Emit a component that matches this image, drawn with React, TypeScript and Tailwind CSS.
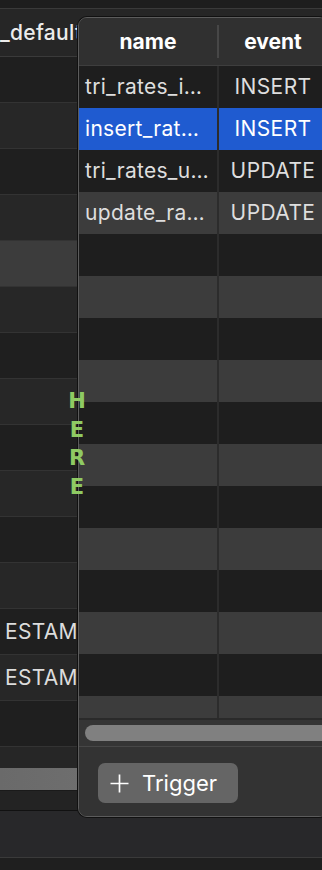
import React from "react"

const bgRows = Array.from({ length: 15 }, (_, i) => i)
const popupRows = [
  { name: "tri_rates_i…", event: "INSERT" },
  { name: "insert_rat…", event: "INSERT" },
  { name: "tri_rates_u…", event: "UPDATE" },
  { name: "update_ra…", event: "UPDATE" },
]

function bgRowClass(i: number) {
  if (i === 4) return "bg-[#3c3c3c]"
  return i % 2 === 0 ? "bg-[#1f1f1f]" : "bg-[#272727]"
}

function popupRowClass(i: number) {
  if (i === 1) return "bg-[#1f5bd0] text-white"
  return i % 2 === 0 ? "bg-[#1e1e1e]" : "bg-[#3c3c3c]"
}

export default function App() {
  return (
    <div
      className="relative w-[322px] h-[870px] overflow-hidden bg-[#1f1f1f] text-[#dedede]"
      style={{ fontFamily: "Inter, 'Liberation Sans', sans-serif" }}
    >
      {/* table behind the sheet */}
      <div className="flex flex-col">
        <div className="h-[9px] bg-[#1e1e1e] border-b border-[#3a3a3a]" />
        <div className="h-[48px] bg-[#262626] border-b border-[#3a3a3a] flex items-center">
          <span className="text-[21px] font-medium text-[#ececec] whitespace-nowrap tracking-[0.3px]">_default</span>
        </div>
        {bgRows.map((i) => (
          <div
            key={i}
            className={`h-[46px] border-b border-[#333333] flex items-center ${bgRowClass(i)}`}
          >
            {(i === 12 || i === 13) && (
              <span className="pl-[5px] text-[21px] text-[#dcdcdc] whitespace-nowrap tracking-[0.3px]">ESTAM</span>
            )}
          </div>
        ))}
        <div className="h-[21px] bg-[#262626]" />
        <div className="h-[22px] bg-gradient-to-r from-[#6a6a6a] to-[#7a7a7a]" />
        <div className="h-[21px] bg-[#232323] border-t border-[#1a1a1a] border-b border-b-[#111111]" />
        <div className="h-[47px] bg-[#28282a] border-b border-[#3a3a3a]" />
        <div className="flex-1 bg-[#1f1f1f]" />
      </div>

      {/* trigger sheet */}
      <div className="absolute left-[77px] top-[16px] w-[252px] h-[802px] rounded-[10px] bg-[#111111] p-px">
        <div className="w-full h-full rounded-[9px] border border-[#5c5c5c] bg-[#333333] overflow-hidden flex flex-col">
          <div className="h-[48px] flex items-center bg-[#303030] border-b border-[#3e3e3e] shrink-0">
            <div className="w-[138px] text-center text-[21px] font-bold text-white">name</div>
            <div className="w-[2px] h-[33px] bg-[#474747]" />
            <div className="flex-1 text-center text-[21px] font-bold text-white">event</div>
          </div>
          <div className="h-[652px] overflow-hidden shrink-0">
            {Array.from({ length: 16 }, (_, i) => i).map((i) => {
              const r = popupRows[i]
              return (
                <div key={i} className={`h-[42px] flex ${popupRowClass(i)}`}>
                  <div className="w-[138px] flex items-center px-[6px]">
                    {r && <span className="whitespace-nowrap text-[21px] tracking-[0.3px]">{r.name}</span>}
                  </div>
                  <div className="w-[2px] bg-[#2c2c2c]" />
                  <div className="flex-1 flex items-center justify-center text-[21px] tracking-[0.4px]">
                    {r && r.event}
                  </div>
                </div>
              )
            })}
          </div>
          <div className="h-[29px] bg-[#353535] border-t-2 border-[#2a2a2a] border-b border-b-[#474747] flex items-center pl-[6px] shrink-0">
            <div className="h-[16px] w-full rounded-l-full bg-[#808080]" />
          </div>
          <div className="flex-1 bg-[#333333] pl-[19px] pt-[16px]">
            <button className="w-[140px] h-[40px] rounded-[7px] bg-[#656565] flex items-center pl-[12px] gap-[13px] text-white">
              <svg width="19" height="19" viewBox="0 0 19 19" fill="none" stroke="white" strokeWidth="1.7">
                <path d="M9.5 0.5v18M0.5 9.5h18" />
              </svg>
              <span className="text-[22px] leading-none">Trigger</span>
            </button>
          </div>
        </div>
      </div>

      {/* marker */}
      <div
        className="absolute left-[68px] top-[387px] flex flex-col items-center w-[18px] text-[21px] font-bold leading-[28.5px] text-[#8fca63]"
        style={{ fontFamily: "'DejaVu Sans', sans-serif" }}
      >
        <span>H</span>
        <span>E</span>
        <span>R</span>
        <span>E</span>
      </div>
    </div>
  )
}
